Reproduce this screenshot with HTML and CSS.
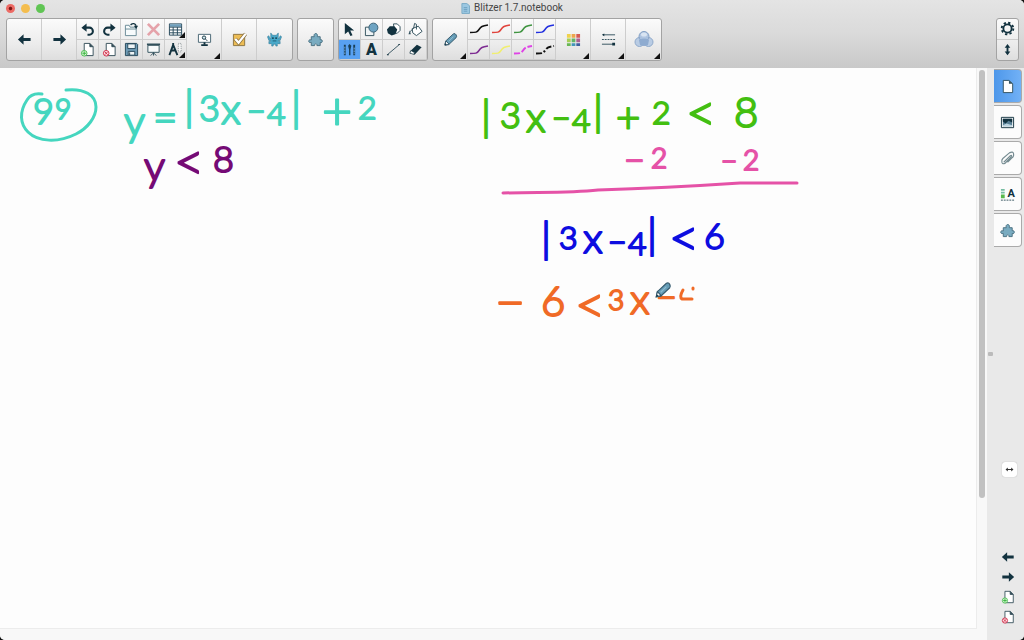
FILE: index.html
```html
<!DOCTYPE html>
<html lang="en">
<head>
    <meta charset="UTF-8">
    <meta name="viewport" content="width=device-width, initial-scale=1.0">
    <title>Blitzer 1.7.notebook</title>
    <link rel="stylesheet" href="styles.css">
</head>
<body>
    <!-- Shared icons -->
    <svg class="sprite" aria-hidden="true">
        <symbol id="left" viewBox="0 0 16 16"><path d="M1 8l6-5.500v3.900h7.500v3.200H7v3.900z" fill="#12323f"/></symbol>
        <symbol id="right" viewBox="0 0 16 16"><path d="M15 8L9 2.500v3.900H1.500v3.200H9v3.900z" fill="#12323f"/></symbol>
        <symbol id="undo" viewBox="0 0 16 16"><path d="M4 6h6a3.500 3.500 0 0 1 0 7.500H8" fill="none" stroke="#12323f" stroke-width="2.200"/><path d="M1.500 6L7 1.500v9z" fill="#12323f"/></symbol>
        <symbol id="redo" viewBox="0 0 16 16"><path d="M12 6H6a3.500 3.500 0 0 0 0 7.500h2" fill="none" stroke="#12323f" stroke-width="2.200"/><path d="M14.500 6L9 1.500v9z" fill="#12323f"/></symbol>
        <symbol id="open" viewBox="0 0 16 16"><path d="M1.500 14.500v-11h4l1 2H13v9zM1.500 7.500H13" fill="#f7fbfc" stroke="#688995"/><path d="M7 3q4-3 6 1" fill="none" stroke="#12323f" stroke-width="1.500"/><path d="M10.500 4H15l-2 3.500z" fill="#12323f"/></symbol>
        <symbol id="delete" viewBox="0 0 16 16"><path d="M2 2l12 12M14 2L2 14" stroke="#e5a3aa" stroke-width="3"/></symbol>
        <symbol id="table" viewBox="0 0 16 16"><path d="M1.500 2h13v12h-13z" fill="#fff" stroke="#25485a"/><path d="M2 2.500h12V5H2z" fill="#6e9fbd"/><path d="M1.500 5.500h13M1.500 8.500h13M1.500 11.500h13M5.500 5.500V14M10 5.500V14" stroke="#25485a"/></symbol>
        <symbol id="page-add" viewBox="0 0 16 16"><path d="M4.500 1.500h6l3.500 3.500v9.500H4.500z" fill="#fff" stroke="#344e59"/><path d="M10.500 1.500V5H14" fill="#344e59" stroke="#344e59"/><circle cx="4.500" cy="12" r="3" fill="#d8f5d4" stroke="#4cbd51"/><path d="M2.500 12h4M4.500 10v4" stroke="#35b33e"/></symbol>
        <symbol id="page-delete" viewBox="0 0 16 16"><path d="M4.500 1.500h6l3.500 3.500v9.500H4.500z" fill="#fff" stroke="#344e59"/><path d="M10.500 1.500V5H14" fill="#344e59" stroke="#344e59"/><circle cx="4.500" cy="12" r="3" fill="#fbdde1" stroke="#d02c49"/><path d="M3 10.500l3 3M6 10.500l-3 3" stroke="#d02c49"/></symbol>
        <symbol id="save" viewBox="0 0 16 16"><path d="M1.500 1.500h12l1 1v12h-13z" fill="#6e9bb5" stroke="#25485a"/><path d="M4 2h8v5H4zM4.500 10h7v4h-7z" fill="#eef4f6" stroke="#25485a"/><path d="M6 11v3" stroke="#25485a"/></symbol>
        <symbol id="screen" viewBox="0 0 16 16"><path d="M2 3.500h12v7.500H2z" fill="#f7fafb" stroke="#31505c"/><path d="M1 2.500h14" stroke="#31505c" stroke-width="2"/><path d="M8 11v3.500M5 14.500l3-3 3 3" fill="none" stroke="#31505c"/></symbol>
        <symbol id="measure" viewBox="0 0 16 16"><path d="M5.500 1v3M5.500 3L1.500 14M5.500 3L10 14M3.500 9h4" fill="none" stroke="#12323f" stroke-width="2"/><path d="M11 1.500h3v9h-3z" fill="#f8f8f8" stroke="#8a9295" stroke-dasharray="1 1"/></symbol>
        <symbol id="monitor" viewBox="0 0 16 16"><path d="M1.500 2.500h13v8.500h-13z" fill="#fff" stroke="#456371"/><path d="M8 11v2.500" stroke="#12323f" stroke-width="2"/><path d="M4.500 14h7" stroke="#12323f" stroke-width="2"/><circle cx="7.500" cy="6" r="1.800" fill="#d8edf3" stroke="#12323f"/><path d="M9 7.500l2 2" stroke="#12323f"/></symbol>
        <symbol id="check" viewBox="0 0 16 16"><path d="M1.500 2.500h12v12h-12z" fill="#edbd55" stroke="#8c7341"/><path d="M3.500 7.500L7 11.500 14.500 2" fill="none" stroke="#8c7341" stroke-width="4"/><path d="M3.500 7.500L7 11.500 14.500 2" fill="none" stroke="#fff" stroke-width="2.500"/></symbol>
        <symbol id="monster" viewBox="0 0 16 16"><path d="M4 4.500V1l2 2.500h4L12 1v3.500V7h1l1-3 1.500 1L14 9h-2v1h2v2.500h-2V12l-1 1v2H9.500l-.5-2H7l-.5 2H5v-2l-1-1v.5H2V10h2V9H2L.5 5 2 4l1 3h1z" fill="#48a9ca" stroke="#327894" stroke-width=".6"/><circle cx="6.300" cy="6.500" r="1" fill="#123b4c"/><circle cx="9.700" cy="6.500" r="1" fill="#123b4c"/><path d="M6 9.500h4" stroke="#1b5c73"/></symbol>
        <symbol id="puzzle" viewBox="0 0 16 16"><path d="M3.500 5h3.200c-1.500-4.500 4.600-4.500 3.200 0H13v3.200c3-1 3 4.200 0 3v3.300H9.500c.7-2.500-3-2.500-2.500 0H3.500V11C0 12.500-.3 7.200 3.500 8.500z" fill="#79abc0" stroke="#496f80"/></symbol>
        <symbol id="cursor" viewBox="0 0 16 16"><path d="M3 1l10 8H8.800l2.400 5-2.200 1-2.400-5L3 13z" fill="#12323f"/></symbol>
        <symbol id="shapes" viewBox="0 0 16 16"><path d="M1.500 5.500h9v9h-9z" fill="#eef3f5" stroke="#31505c"/><circle cx="10" cy="6" r="4.800" fill="#6ea4c3" stroke="#385f74"/></symbol>
        <symbol id="polygon" viewBox="0 0 16 16"><path d="M8 2h4l3 3v4l-3 3H9z" fill="#fff" stroke="#31505c"/><path d="M4 4.500h5l3 3.500-2 5-4 1.500L2 12 1 8z" fill="#12323f"/></symbol>
        <symbol id="bucket" viewBox="0 0 16 16"><path d="M4.500 7L11 4.500l4 5.500-6 4.500-4-3z" fill="#fff" stroke="#31505c"/><path d="M9 8V2.500L7 1.500l-1 5-4 4" fill="none" stroke="#31505c"/><path d="M2 9L.5 13H3z" fill="#31505c"/></symbol>
        <symbol id="pens" viewBox="0 0 16 16"><path d="M2 3h2v11H2zM8 2L6.500 4l1 4v6h1.500V8l1-4zM12 3h2v11h-2z" fill="#183f58"/><path d="M3 5v8M13 6v7" stroke="#78b1e4" stroke-dasharray="2 1"/></symbol>
        <symbol id="line" viewBox="0 0 16 16"><path d="M1.500 13.500l13-11" stroke="#385460"/><path d="M1 13h2v1H1zM13 2h2v1h-2z" fill="#12323f"/></symbol>
        <symbol id="eraser" viewBox="0 0 16 16"><path d="M2 10l7.500-7 5 2.500-7.500 8-5-1.500z" fill="#12323f"/><path d="M3 9l4 2.500-1 1.500-4-1z" fill="#fff" stroke="#12323f" stroke-width=".6"/></symbol>
        <symbol id="pen" viewBox="0 0 16 16"><path d="M2 14l1-4.500L11 2q2-1 3 1t0 3l-8 7.500z" fill="#659cb6" stroke="#34586b"/><path d="M2 14l1-4.500L6.500 13z" fill="#fff" stroke="#34586b"/><path d="M2 14l.5-2 1.500 1z" fill="#12323f"/><path d="M6 10l5-5" stroke="#8fbdd1"/></symbol>
        <symbol id="squiggle" viewBox="0 0 20 12"><path d="M1 9.500c6 0 7 0 9-3s3-3.500 9-4.500" fill="none" stroke="currentColor"/></symbol>
        <symbol id="palette" viewBox="0 0 16 16"><path d="M1 2h4v4H1z" fill="#f0d24c"/><path d="M6 2h4v4H6z" fill="#eda64f"/><path d="M11 2h4v4h-4z" fill="#d75a54"/><path d="M1 7h4v4H1z" fill="#a6cf56"/><path d="M6 7h4v4H6z" fill="#65b567"/><path d="M11 7h4v4h-4z" fill="#ad6193"/><path d="M1 12h4v3H1z" fill="#68b754"/><path d="M6 12h4v3H6z" fill="#4296b8"/><path d="M11 12h4v3h-4z" fill="#405f9e"/></symbol>
        <symbol id="lines" viewBox="0 0 16 16"><path d="M2 3h13M1 13h12" stroke="#31505c"/><path d="M1 8h14" stroke="#31505c" stroke-dasharray="2 1"/><path d="M1 3l2.500-1.500v3zM12 11.500h3v3h-3z" fill="#12323f"/></symbol>
        <symbol id="balls" viewBox="0 0 20 20"><circle cx="5.500" cy="12" r="4.500" fill="#b9cce4" stroke="#90aacb"/><circle cx="14.500" cy="12" r="4.500" fill="#b9cce4" stroke="#90aacb"/><circle cx="10" cy="6.500" r="5" fill="#a9c0df" fill-opacity=".9" stroke="#829fc4"/><path d="M5 10q5-3 10 0l-1 5q-4 2-8 0z" fill="#8eabd0"/><ellipse cx="10" cy="4.500" rx="3" ry="2" fill="#d8e4f2"/></symbol>
        <symbol id="gear" viewBox="0 0 16 16"><circle cx="8" cy="8" r="4.400" fill="none" stroke="#12323f" stroke-width="2"/><circle cx="8" cy="8" r="6.200" fill="none" stroke="#12323f" stroke-width="2" stroke-dasharray="2.430 2.430"/></symbol>
        <symbol id="updown" viewBox="0 0 16 16"><path d="M8 2l3 4H9v4h2l-3 4-3-4h2V6H5z" fill="#12323f"/></symbol>
        <symbol id="leftright" viewBox="0 0 16 16"><path d="M1 8l4-3.500V7h6V4.500L15 8l-4 3.500V9H5v2.500z" fill="#333"/></symbol>
        <symbol id="page" viewBox="0 0 16 16"><path d="M3.500 1.500h6L13.500 5v9.500h-10z" fill="#fff" stroke="#31505c"/><path d="M9.500 1.500V5h4z" fill="#31505c"/></symbol>
        <symbol id="picture" viewBox="0 0 16 16"><path d="M1.500 2.500h13v11h-13z" fill="#fff" stroke="#12323f"/><path d="M3 4h10v8H3z" fill="#587f95"/><path d="M3 4h10v4L9 6 6 9 3 7z" fill="#12323f"/><path d="M3 11l4-2 6 2v1H3z" fill="#b9d3df"/></symbol>
        <symbol id="clip" viewBox="0 0 16 16"><path d="M4 12l7-7q2-1 1 1l-6.500 7q-3 1.500-3.500-1t1-4l7-6q4-2 4.500 1t-2 4.500L8 12" fill="none" stroke="#758b91" stroke-width="1.200"/></symbol>
        <symbol id="bars" viewBox="0 0 16 16"><path d="M1 2h4v2H1zM1 5h4v2H1z" fill="#76bda2"/><path d="M1 8h4v4H1z" fill="#58b94d"/><path d="M1 14h14" stroke="#31505c" stroke-dasharray="2 1"/></symbol>
    </svg>

    <div class="window">
        <header class="header">
            <div class="titlebar">
                <div class="lights">
                    <button class="light close" aria-label="Close"></button>
                    <button class="light minimize" aria-label="Minimize"></button>
                    <button class="light zoom" aria-label="Zoom"></button>
                </div>
                <h1 class="title"><svg class="title-icon" viewBox="0 0 10 12"><path d="M1 .5h5.500L9.500 3v8.500H1z" fill="#9cc8e2" stroke="#76a8c4"/><path d="M3 5h4M3 7h4M3 9h4" stroke="#6b9fbe"/></svg>Blitzer 1.7.notebook</h1>
            </div>
            <div class="toolbar">
                <div class="group">
                    <button class="tool" aria-label="Previous page"><svg><use href="#left"/></svg></button>
                    <button class="tool" aria-label="Next page"><svg><use href="#right"/></svg></button>
                    <div class="grid cols-5">
                        <button class="tool" aria-label="Undo"><svg><use href="#undo"/></svg></button>
                        <button class="tool" aria-label="Redo"><svg><use href="#redo"/></svg></button>
                        <button class="tool" aria-label="Open"><svg><use href="#open"/></svg></button>
                        <button class="tool" aria-label="Delete"><svg><use href="#delete"/></svg></button>
                        <button class="tool more" aria-label="Table"><svg><use href="#table"/></svg></button>
                        <button class="tool" aria-label="Add page"><svg><use href="#page-add"/></svg></button>
                        <button class="tool" aria-label="Delete page"><svg><use href="#page-delete"/></svg></button>
                        <button class="tool" aria-label="Save"><svg><use href="#save"/></svg></button>
                        <button class="tool" aria-label="Screen shade"><svg><use href="#screen"/></svg></button>
                        <button class="tool more" aria-label="Measurement tools"><svg><use href="#measure"/></svg></button>
                    </div>
                    <button class="tool more" aria-label="View screens"><svg><use href="#monitor"/></svg></button>
                    <button class="tool" aria-label="Response"><svg><use href="#check"/></svg></button>
                    <button class="tool" aria-label="Activities"><svg><use href="#monster"/></svg></button>
                </div>
                <div class="group">
                    <button class="tool" aria-label="Add-ons"><svg><use href="#puzzle"/></svg></button>
                </div>
                <div class="group">
                    <div class="grid cols-4">
                        <button class="tool" aria-label="Select"><svg><use href="#cursor"/></svg></button>
                        <button class="tool" aria-label="Shapes"><svg><use href="#shapes"/></svg></button>
                        <button class="tool" aria-label="Polygons"><svg><use href="#polygon"/></svg></button>
                        <button class="tool" aria-label="Fill"><svg><use href="#bucket"/></svg></button>
                        <button class="tool active" aria-label="Pens"><svg><use href="#pens"/></svg></button>
                        <button class="tool letter" aria-label="Text">A</button>
                        <button class="tool" aria-label="Lines"><svg><use href="#line"/></svg></button>
                        <button class="tool" aria-label="Eraser"><svg><use href="#eraser"/></svg></button>
                    </div>
                </div>
                <div class="group">
                    <button class="tool more" aria-label="Pen type"><svg><use href="#pen"/></svg></button>
                    <div class="grid cols-4">
                        <button class="tool pen black" aria-label="Black pen"><svg><use href="#squiggle"/></svg></button>
                        <button class="tool pen red" aria-label="Red pen"><svg><use href="#squiggle"/></svg></button>
                        <button class="tool pen darkgreen" aria-label="Green pen"><svg><use href="#squiggle"/></svg></button>
                        <button class="tool pen blue" aria-label="Blue pen"><svg><use href="#squiggle"/></svg></button>
                        <button class="tool pen violet" aria-label="Purple pen"><svg><use href="#squiggle"/></svg></button>
                        <button class="tool pen yellow" aria-label="Yellow highlighter"><svg><use href="#squiggle"/></svg></button>
                        <button class="tool pen magenta dashed" aria-label="Dashed magenta pen"><svg><use href="#squiggle"/></svg></button>
                        <button class="tool pen black dotted" aria-label="Dotted black pen"><svg><use href="#squiggle"/></svg></button>
                    </div>
                    <button class="tool more" aria-label="Color"><svg><use href="#palette"/></svg></button>
                    <button class="tool more" aria-label="Line style"><svg><use href="#lines"/></svg></button>
                    <button class="tool more big" aria-label="Transparency"><svg><use href="#balls"/></svg></button>
                </div>
                <div class="group settings">
                    <button class="tool" aria-label="Settings"><svg><use href="#gear"/></svg></button>
                    <button class="tool" aria-label="Move toolbar"><svg><use href="#updown"/></svg></button>
                </div>
            </div>
        </header>

        <main class="main">
            <section class="page">
                <svg class="ink" role="group" aria-label="Notebook page">
                    <path class="stroke teal" d="M42 26C35 25 30 27 27 32C19 44 20 56 28 64C38 74 58 75 76 66C88 60 96 49 96 39C96 27 84 20 66 22"/>
                    <text class="teal">
                        <tspan class="l" x="33" y="56">9</tspan><tspan class="s" x="55" y="51">9</tspan>
                        <tspan class="xl" x="124" y="68">y</tspan>
                        <tspan class="xl" x="153" y="64">=</tspan>
                        <tspan class="xl" x="184" y="53">|</tspan><tspan class="l" x="199" y="53">3</tspan><tspan class="xl" x="221" y="56">x</tspan><tspan class="m" x="247" y="54">−</tspan><tspan class="m" x="267" y="57">4</tspan><tspan class="xl" x="291" y="54">|</tspan>
                        <tspan class="xxl" x="322" y="61">+</tspan><tspan class="m" x="358" y="51">2</tspan>
                    </text>
                    <text class="purple">
                        <tspan class="xl" x="144" y="113">y</tspan><tspan class="xxl" x="174" y="112">&lt;</tspan><tspan class="l" x="213" y="104">8</tspan>
                    </text>
                    <text class="green">
                        <tspan class="xl" x="481" y="63">|</tspan><tspan class="l" x="500" y="60">3</tspan><tspan class="xl" x="526" y="64">x</tspan><tspan class="m" x="552" y="61">−</tspan><tspan class="m" x="572" y="64">4</tspan><tspan class="xl" x="593" y="58">|</tspan>
                        <tspan class="xl" x="616" y="64">+</tspan><tspan class="m" x="652" y="56">2</tspan><tspan class="xxl" x="686" y="63">&lt;</tspan><tspan class="xl" x="734" y="59">8</tspan>
                    </text>
                    <text class="pink">
                        <tspan class="l" x="624" y="105">−</tspan><tspan class="s" x="651" y="100">2</tspan>
                        <tspan class="s" x="721" y="103">−</tspan><tspan class="s" x="743" y="102">2</tspan>
                    </text>
                    <path class="stroke pink" d="M503 125C545 124 570 125 598 122C665 120 710 117 740 115L797 115"/>
                    <text class="navy">
                        <tspan class="xl" x="541" y="185">|</tspan><tspan class="m" x="559" y="181">3</tspan><tspan class="xl" x="583" y="185">x</tspan><tspan class="m" x="608" y="185">−</tspan><tspan class="m" x="628" y="187">4</tspan><tspan class="xl" x="647" y="181">|</tspan>
                        <tspan class="xxl" x="669" y="188">&lt;</tspan><tspan class="l" x="704" y="181">6</tspan>
                    </text>
                    <text class="orange">
                        <tspan class="xxl" x="495" y="252">−</tspan><tspan class="xl" x="541" y="248">6</tspan><tspan class="xxl" x="575" y="255">&lt;</tspan><tspan class="s" x="608" y="242">3</tspan><tspan class="xl" x="630" y="246">x</tspan><tspan class="l" x="656" y="242">−</tspan>
                    </text>
                    <!-- stroke in progress -->
                    <path class="stroke orange" d="M683 222Q679 229 682 231L692 231M693 220v1"/>
                    <use href="#pen" x="654" y="213" width="18" height="18"/>
                </svg>
            </section>
            <div class="scroll"><div class="thumb"></div></div>
            <aside class="sidebar">
                <div class="tabs">
                    <button class="tab selected" aria-label="Page sorter"><svg><use href="#page"/></svg></button>
                    <button class="tab" aria-label="Gallery"><svg><use href="#picture"/></svg></button>
                    <button class="tab" aria-label="Attachments"><svg><use href="#clip"/></svg></button>
                    <button class="tab" aria-label="Properties"><svg><use href="#bars"/></svg><span class="tab-letter">A</span></button>
                    <button class="tab" aria-label="Add-ons"><svg><use href="#puzzle"/></svg></button>
                </div>
                <div class="splitter"></div>
                <button class="swap" aria-label="Move sidebar"><svg><use href="#leftright"/></svg></button>
                <nav class="pages">
                    <button class="nav" aria-label="Previous page"><svg><use href="#left"/></svg></button>
                    <button class="nav" aria-label="Next page"><svg><use href="#right"/></svg></button>
                    <button class="nav" aria-label="Add page"><svg><use href="#page-add"/></svg></button>
                    <button class="nav" aria-label="Delete page"><svg><use href="#page-delete"/></svg></button>
                </nav>
            </aside>
        </main>
    </div>
</body>
</html>
```
FILE: styles.css
```css
* {
    box-sizing: border-box;
}
body {
    margin: 0;
    background-color: #111;
    font-family: Roboto, "Liberation Sans", sans-serif;
}
button {
    padding: 0;
    border: none;
    background: none;
    cursor: pointer;
}
svg {
    display: block;
}
.sprite {
    position: absolute;
    width: 0;
    height: 0;
}
.window {
    display: flex;
    flex-direction: column;
    height: 100vh;
    border-radius: 5px;
    overflow: hidden;
    background-color: #e9e9e9;
}

/* Title bar and toolbar */
.header {
    height: 68px;
    flex: none;
    background: linear-gradient(#e4e4e4, #dadada 50%, #c9c9c9);
}
.titlebar {
    display: grid;
    grid-template-columns: 1fr auto 1fr;
    align-items: center;
    height: 16px;
}
.lights {
    display: flex;
    gap: 6px;
    padding-left: 6px;
}
.light {
    width: 9px;
    height: 9px;
    border-radius: 50%;
}
.close {
    background: radial-gradient(#7a1614 20%, #ec6a64 35%);
}
.minimize {
    background-color: #f4bd4e;
}
.zoom {
    background-color: #60c554;
}
.title {
    display: flex;
    align-items: center;
    gap: 4px;
    margin: 0;
    font-size: 10px;
    font-weight: 400;
    line-height: 16px;
    color: #444;
}
.title-icon {
    width: 9px;
    height: 11px;
}
.toolbar {
    display: flex;
    gap: 4px;
    padding: 2px 5px 0 6px;
}
.group {
    display: flex;
    height: 43px;
    border: 1px solid #a3a3a3;
    border-radius: 3px;
    background: linear-gradient(#fbfbfb, #ececec 60%, #dedede);
    overflow: hidden;
}
.tool {
    position: relative;
    display: flex;
    align-items: center;
    justify-content: center;
    width: 35px;
    border-right: 1px solid #cdcdcd;
}
.group > .tool:last-child {
    border-right: none;
}
.tool svg {
    width: 15px;
    height: 15px;
}
.big svg {
    width: 20px;
    height: 20px;
}
.grid {
    display: grid;
    grid-template-rows: 21px 20px;
}
.cols-5 {
    grid-template-columns: repeat(5, 22px);
}
.cols-4 {
    grid-template-columns: repeat(4, 22px);
}
.grid .tool {
    width: 22px;
    border-bottom: 1px solid #cdcdcd;
}
.more::after {
    content: "";
    position: absolute;
    right: 1px;
    bottom: 1px;
    border: 3px solid;
    border-color: transparent #111 #111 transparent;
}
.active {
    background-color: #58a1f2;
}
.letter {
    color: #12323f;
    font: 900 16px/20px Roboto, sans-serif;
}
.tool.pen svg {
    width: 20px;
    height: 12px;
    stroke-width: 1.5;
}
.tool.dashed svg {
    stroke-width: 2;
    stroke-dasharray: 6 2;
}
.tool.dotted svg {
    stroke-width: 2;
    stroke-dasharray: 6 2 2 2;
}
.black { color: #111; }
.red { color: #e0433c; }
.darkgreen { color: #3f9440; }
.blue { color: #2230df; }
.violet { color: #7d2b91; }
.yellow { color: #f0ee70; }
.magenta { color: #df43e6; }
.settings {
    flex-direction: column;
    margin-left: auto;
}
.settings .tool {
    width: 21px;
    height: 21px;
    border-right: none;
}
.settings .tool:first-child {
    border-bottom: 1px solid #cdcdcd;
}

/* Page */
.main {
    display: flex;
    flex: 1;
    min-height: 0;
}
.page {
    flex: 1;
    margin-bottom: 11px;
    border-right: 1px solid #ececec;
    border-bottom: 1px solid #ececec;
    background-color: #fdfdfd;
    box-shadow: 0 11px #f8f8f8;
}
.ink {
    width: 100%;
    height: 100%;
    font-family: Lato, sans-serif;
    font-weight: 300;
}
.ink text {
    fill: currentColor;
    stroke: currentColor;
    stroke-width: 2;
    stroke-linecap: round;
    stroke-linejoin: round;
}
.s { font-size: 28px; }
.m { font-size: 32px; }
.l { font-size: 36px; }
.xl { font-size: 42px; }
.xxl { font-size: 52px; }
.stroke {
    fill: none;
    stroke: currentColor;
    stroke-width: 3;
    stroke-linecap: round;
    stroke-linejoin: round;
}
.teal { color: #45d6bf; }
.purple { color: #750a75; }
.green { color: #43bf11; }
.pink { color: #e552a7; }
.navy { color: #0d0de0; }
.orange { color: #f06a26; }
.scroll {
    width: 10px;
    padding: 2px 1px 0 2px;
    background-color: #f8f8f8;
}
.thumb {
    width: 6px;
    height: 75%;
    border-radius: 3px;
    background-color: #c1c1c1;
}

/* Sidebar */
.sidebar {
    display: flex;
    flex-direction: column;
    width: 37px;
    padding: 1px 2px 16px 1px;
    background-color: #e9e9e9;
}
.tabs {
    display: flex;
    flex-direction: column;
    gap: 2px;
    margin-left: 6px;
}
.tab {
    display: flex;
    align-items: center;
    justify-content: center;
    height: 34px;
    border: 1px solid #aaa;
    border-left: none;
    border-radius: 0 4px 4px 0;
    background-color: #fcfcfc;
}
.tab svg {
    width: 15px;
    height: 15px;
}
.tab:nth-child(4) {
    position: relative;
}
.tab-letter {
    position: absolute;
    right: 6px;
    color: #12323f;
    font: 700 11px/12px Roboto, sans-serif;
}
.selected {
    background: linear-gradient(90deg, #4d97ea, #72b1f6);
}
.splitter {
    width: 5px;
    height: 4px;
    margin-top: 105px;
    border-radius: 1px;
    background-color: #bbb;
}
.swap {
    display: flex;
    align-items: center;
    justify-content: center;
    width: 15px;
    height: 15px;
    margin: auto 5px 73px auto;
    border-radius: 3px;
    background-color: #fff;
    box-shadow: 0 0 1px #999;
}
.swap svg {
    width: 9px;
    height: 9px;
}
.pages {
    display: flex;
    flex-direction: column;
    align-items: center;
    gap: 6px;
    margin-left: 6px;
}
.nav svg {
    width: 14px;
    height: 14px;
}
```
